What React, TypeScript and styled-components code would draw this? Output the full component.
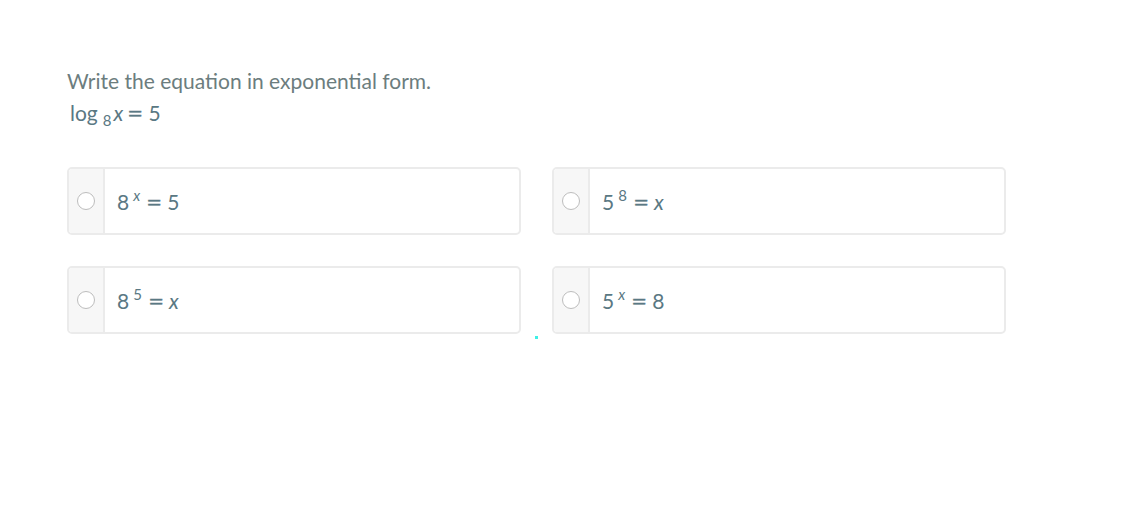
import React from 'react';
import styled, { createGlobalStyle } from 'styled-components';

const GlobalStyle = createGlobalStyle`
    html, body {
        margin: 0;
        padding: 0;
        background: #ffffff;
    }
    body {
        font-family: Lato, 'Open Sans', sans-serif;
    }
`;

const Page = styled.div`
    position: relative;
    width: 1129px;
    height: 516px;
    padding: 67px 0 0 67px;
    box-sizing: border-box;
`;

const Prompt = styled.p`
    margin: 0;
    font-size: 21px;
    line-height: 28px;
    color: #6c7d7e;
`;

const MathLine = styled.div`
    margin-top: 5px;
    font-size: 21px;
    line-height: 26px;
    color: #5a7883;
    padding-left: 3px;
`;

const Sub = styled.sub`
    font-size: 15px;
    line-height: 0;
    vertical-align: -5px;
    margin: 0 2px 0 5px;
`;

const Sup = styled.sup`
    font-size: 15px;
    line-height: 0;
    vertical-align: 9px;
    margin: 0 2px 0 4px;
`;

const Var = styled.i`
    font-style: italic;
`;

const Eq = styled.span`
    display: inline-block;
    margin: 0 7px 0 6px;
    transform: scaleX(1.3);
    -webkit-text-stroke: 0.4px currentColor;
`;

const Choices = styled.div`
    display: grid;
    grid-template-columns: 454px 454px;
    column-gap: 31px;
    row-gap: 31px;
    margin-top: 41px;
`;

const Choice = styled.label`
    display: flex;
    height: 68px;
    box-sizing: border-box;
    border: 2px solid #ebebeb;
    border-radius: 5px;
    overflow: hidden;
    background: #ffffff;
    cursor: pointer;
`;

const RadioCell = styled.div`
    width: 34px;
    flex: none;
    display: flex;
    align-items: center;
    justify-content: center;
    background: #f7f7f7;
    border-right: 2px solid #ebebeb;
`;

const Radio = styled.span`
    width: 16px;
    height: 16px;
    border-radius: 50%;
    border: 1px solid #bdbdbd;
    background: #ffffff;
`;

const ChoiceText = styled.div`
    display: flex;
    align-items: center;
    padding-left: 12px;
    font-size: 21px;
    color: #5a7883;
`;

const Dot = styled.span`
    position: absolute;
    left: 535px;
    top: 336px;
    width: 3px;
    height: 3px;
    background: #3ff0e6;
`;

type Option = { base: string; exp: React.ReactNode; rhs: React.ReactNode };

const options: Option[] = [
    { base: '8', exp: <Var>x</Var>, rhs: '5' },
    { base: '5', exp: '8', rhs: <Var>x</Var> },
    { base: '8', exp: '5', rhs: <Var>x</Var> },
    { base: '5', exp: <Var>x</Var>, rhs: '8' },
];

export default function App() {
    return (
        <>
            <GlobalStyle />
            <Page>
                <Prompt>Write the equation in exponential form.</Prompt>
                <MathLine>
                    log<Sub>8</Sub>
                    <Var>x</Var>
                    <Eq>=</Eq>5
                </MathLine>
                <Choices>
                    {options.map((o, i) => (
                        <Choice key={i}>
                            <RadioCell>
                                <Radio />
                            </RadioCell>
                            <ChoiceText>
                                <span>
                                    {o.base}
                                    <Sup>{o.exp}</Sup>
                                    <Eq>=</Eq>
                                    {o.rhs}
                                </span>
                            </ChoiceText>
                        </Choice>
                    ))}
                </Choices>
                <Dot />
            </Page>
        </>
    );
}
